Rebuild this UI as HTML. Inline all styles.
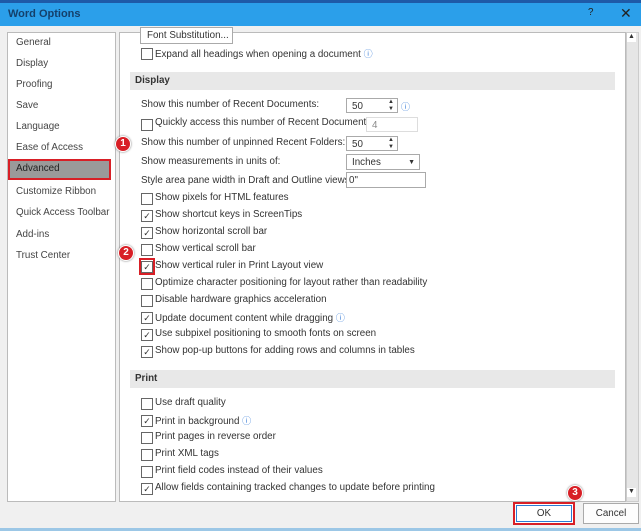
<!DOCTYPE html><html><head><style>
body{margin:0;width:641px;height:531px;overflow:hidden;background:#f0f0f0;font-family:"Liberation Sans",sans-serif;font-size:9.8px;color:#333;position:relative}
.a{position:absolute;white-space:nowrap}
.cb{position:absolute;width:10px;height:10px;border:1px solid #666;background:#fff;font-size:9px;line-height:10px;text-align:center;color:#333}
.sp{position:absolute;border:1px solid #aaa;background:#fff;height:15px;line-height:15px;padding-left:5px;box-sizing:border-box}
.hd{position:absolute;left:130px;width:485px;height:18px;background:#e8e8e8;font-weight:bold;line-height:18px;padding-left:5px;box-sizing:border-box}
.n{position:absolute;width:14px;height:14px;border-radius:50%;background:#d81f26;color:#fff;font-weight:bold;font-size:10px;text-align:center;line-height:14px;border:1px solid #fff;box-shadow:0 0 2px #777}
.i{color:#3b7fd8;font-size:9px}
.l{position:absolute;left:16px;color:#444}
</style></head><body>
<div class="a" style="left:0;top:0;width:641px;height:3px;background:#1e5aa8"></div>
<div class="a" style="left:0;top:3px;width:641px;height:23px;background:#2b9fea"></div>
<div class="a" style="left:8px;top:8px;font-weight:bold;color:#14406b;font-size:11px">Word Options</div>
<div class="a" style="left:588px;top:7px;color:#222">?</div>
<div class="a" style="left:620px;top:5px;color:#222;font-size:14px">✕</div>
<div class="a" style="left:7px;top:32px;width:107px;height:468px;background:#fff;border:1px solid #bbb"></div>
<div class="l" style="top:37px">General</div>
<div class="l" style="top:58px">Display</div>
<div class="l" style="top:79px">Proofing</div>
<div class="l" style="top:100px">Save</div>
<div class="l" style="top:121px">Language</div>
<div class="l" style="top:142px">Ease of Access</div>
<div class="a" style="left:8px;top:159px;width:103px;height:21px;background:#9a9a9a;border:2px solid #d81f26;box-sizing:border-box"></div>
<div class="l" style="top:163px;color:#222">Advanced</div>
<div class="l" style="top:186px">Customize Ribbon</div>
<div class="l" style="top:207px">Quick Access Toolbar</div>
<div class="l" style="top:229px">Add-ins</div>
<div class="l" style="top:250px">Trust Center</div>
<div class="a" style="left:119px;top:32px;width:505px;height:468px;background:#fff;border:1px solid #bbb"></div>
<div class="a" style="left:626px;top:32px;width:11px;height:468px;background:#e6e6e6;border:1px solid #ccc"></div>
<div class="a" style="left:627px;top:33px;width:9px;height:9px;background:#fff;font-size:7px;text-align:center">▲</div>
<div class="a" style="left:627px;top:488px;width:9px;height:9px;background:#fff;font-size:7px;text-align:center">▼</div>
<div class="a" style="left:140px;top:27px;width:85px;height:15px;border:1px solid #aaa;background:#fff;padding-left:6px;line-height:15px">Font Substitution...</div>
<div class="cb" style="left:141px;top:48px"></div><div class="a" style="left:155px;top:47px">Expand all headings when opening a document <span class="i">ⓘ</span></div>
<div class="hd" style="top:72px">Display</div>
<div class="a" style="left:141px;top:99px">Show this number of Recent Documents:</div>
<div class="sp" style="left:346px;top:98px;width:52px">50<span style="float:right;font-size:6px;padding-right:3px;line-height:7px">▲<br>▼</span></div><div class="a i" style="left:401px;top:100px">ⓘ</div>
<div class="cb" style="left:141px;top:119px"></div><div class="a" style="left:155px;top:117px">Quickly access this number of Recent Documents:</div>
<div class="sp" style="left:366px;top:117px;width:52px;border-color:#ddd;color:#888">4</div>
<div class="a" style="left:141px;top:137px">Show this number of unpinned Recent Folders:</div>
<div class="sp" style="left:346px;top:136px;width:52px">50<span style="float:right;font-size:6px;padding-right:3px;line-height:7px">▲<br>▼</span></div>
<div class="a" style="left:141px;top:156px">Show measurements in units of:</div>
<div class="sp" style="left:346px;top:154px;width:74px;height:16px">Inches<span style="float:right;font-size:7px;padding-right:4px">▼</span></div>
<div class="a" style="left:141px;top:175px">Style area pane width in Draft and Outline views:</div>
<div class="sp" style="left:346px;top:172px;width:80px;height:16px;padding-left:2px">0"</div>
<div class="cb" style="left:141px;top:193px"></div><div class="a" style="left:155px;top:192px">Show pixels for HTML features</div>
<div class="cb" style="left:141px;top:210px">✓</div><div class="a" style="left:155px;top:209px">Show shortcut keys in ScreenTips</div>
<div class="cb" style="left:141px;top:227px">✓</div><div class="a" style="left:155px;top:226px">Show horizontal scroll bar</div>
<div class="cb" style="left:141px;top:244px"></div><div class="a" style="left:155px;top:243px">Show vertical scroll bar</div>
<div class="cb" style="left:141px;top:261px">✓</div><div class="a" style="left:139px;top:258px;width:12px;height:13px;border:2px solid #d81f26"></div><div class="a" style="left:155px;top:260px">Show vertical ruler in Print Layout view</div>
<div class="cb" style="left:141px;top:278px"></div><div class="a" style="left:155px;top:277px">Optimize character positioning for layout rather than readability</div>
<div class="cb" style="left:141px;top:295px"></div><div class="a" style="left:155px;top:294px">Disable hardware graphics acceleration</div>
<div class="cb" style="left:141px;top:312px">✓</div><div class="a" style="left:155px;top:311px">Update document content while dragging <span class="i">ⓘ</span></div>
<div class="cb" style="left:141px;top:329px">✓</div><div class="a" style="left:155px;top:328px">Use subpixel positioning to smooth fonts on screen</div>
<div class="cb" style="left:141px;top:346px">✓</div><div class="a" style="left:155px;top:345px">Show pop-up buttons for adding rows and columns in tables</div>
<div class="hd" style="top:370px">Print</div>
<div class="cb" style="left:141px;top:398px"></div><div class="a" style="left:155px;top:397px">Use draft quality</div>
<div class="cb" style="left:141px;top:415px">✓</div><div class="a" style="left:155px;top:414px">Print in background <span class="i">ⓘ</span></div>
<div class="cb" style="left:141px;top:432px"></div><div class="a" style="left:155px;top:431px">Print pages in reverse order</div>
<div class="cb" style="left:141px;top:449px"></div><div class="a" style="left:155px;top:448px">Print XML tags</div>
<div class="cb" style="left:141px;top:466px"></div><div class="a" style="left:155px;top:465px">Print field codes instead of their values</div>
<div class="cb" style="left:141px;top:483px">✓</div><div class="a" style="left:155px;top:482px">Allow fields containing tracked changes to update before printing</div>
<div class="a" style="left:513px;top:502px;width:62px;height:23px;border:2px solid #d81f26;box-sizing:border-box;background:#fff"><div style="margin:1px;border:1px solid #2b7cd3;height:15px;text-align:center;line-height:15px">OK</div></div>
<div class="a" style="left:583px;top:503px;width:56px;height:21px;border:1px solid #aaa;background:#fdfdfd;box-sizing:border-box;text-align:center;line-height:19px">Cancel</div>
<div class="a" style="left:0;top:528px;width:641px;height:3px;background:#9cc7e6"></div>
<div class="n" style="left:115px;top:136px">1</div>
<div class="n" style="left:118px;top:245px">2</div>
<div class="n" style="left:567px;top:485px">3</div>
</body></html>
